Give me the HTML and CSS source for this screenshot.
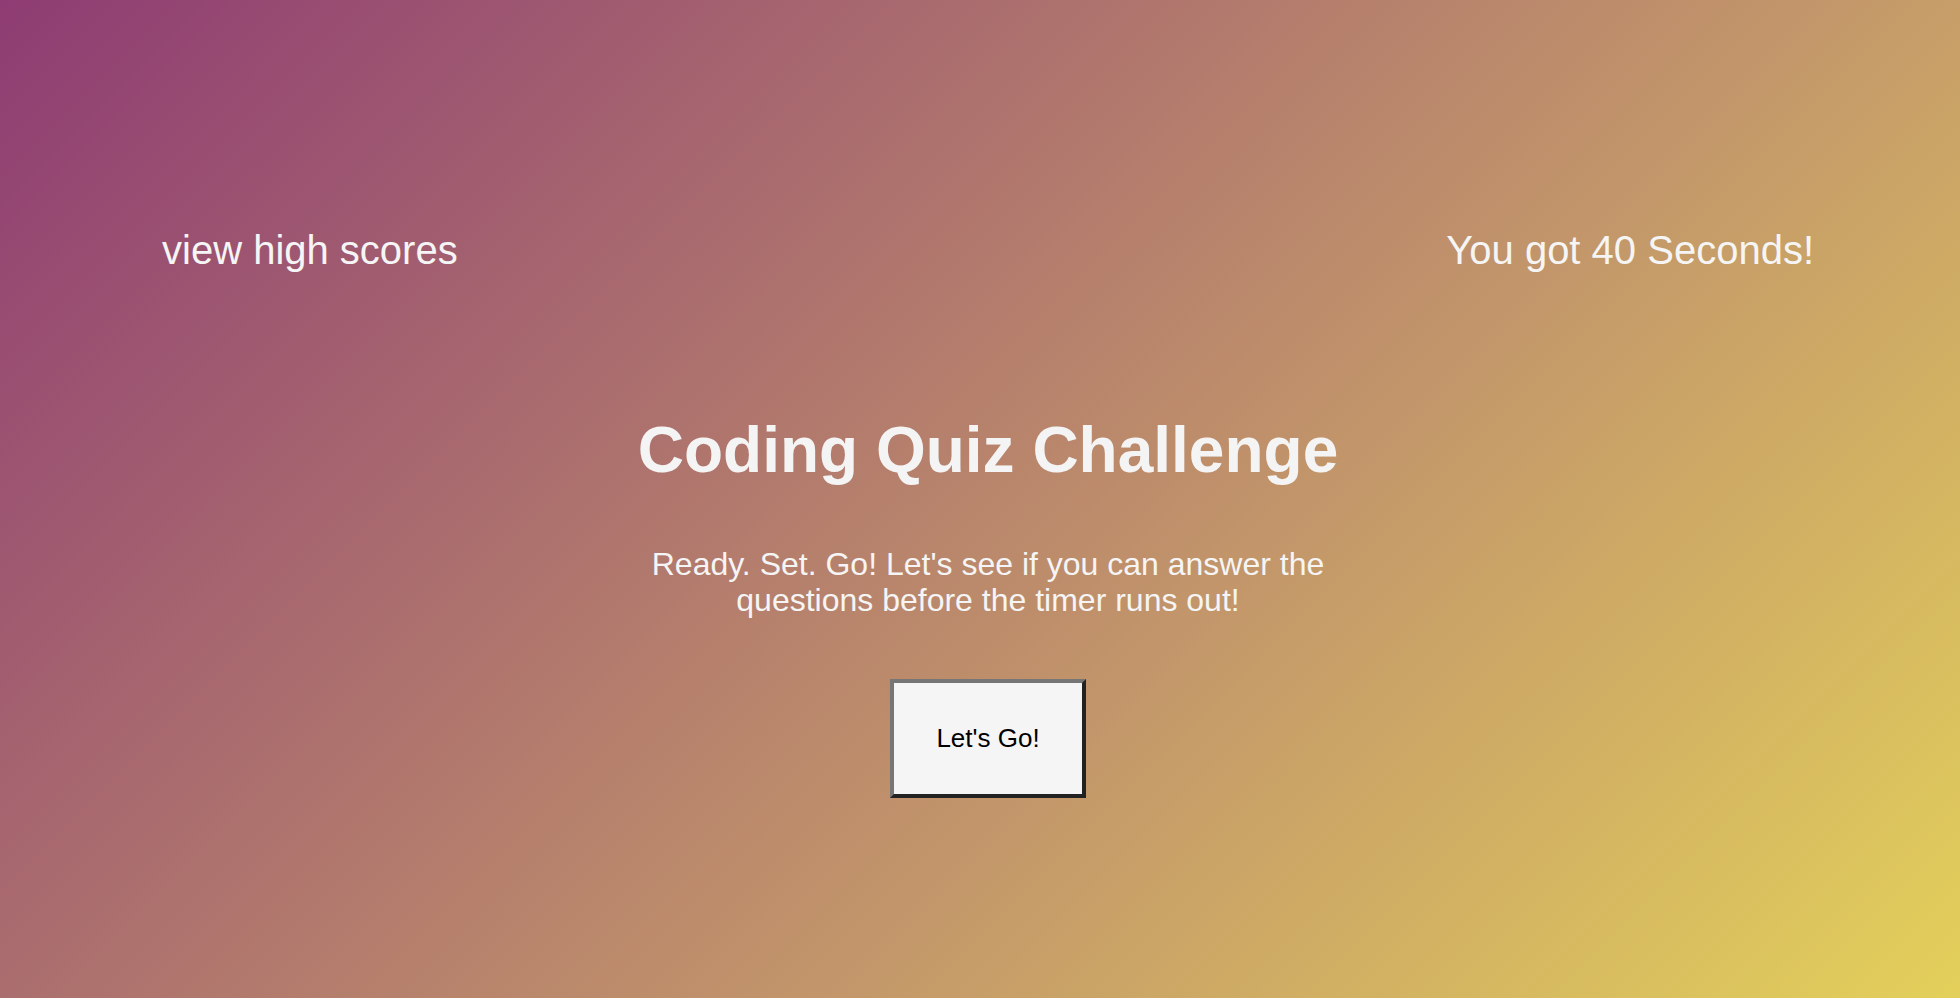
FILE: index.html
```html
<!DOCTYPE html>
<html lang="en">
<head>
    <meta charset="UTF-8">
    <meta name="viewport" content="width=device-width, initial-scale=1.0">
    <title>Coding Quiz Challenge</title>
    <link rel="stylesheet" href="styles.css">
</head>
<body>
    <div class="page">
        <header class="top-bar">
            <a href="#" class="high-scores">view high scores</a>
            <div class="timer">You got <span id="time-left">40</span> Seconds!</div>
        </header>
        <!-- Start screen -->
        <main class="intro">
            <h1>Coding Quiz Challenge</h1>
            <p>Ready. Set. Go! Let's see if you can answer the questions before the timer runs out!</p>
            <button class="btn-start" id="start">Let's Go!</button>
        </main>
    </div>
</body>
</html>
```

FILE: styles.css
```css
html, body {
    margin: 0;
    padding: 0;
    height: 100%;
}
body {
    font-family: "Liberation Sans", Arial, sans-serif;
    color: #f5f5f5;
    background: linear-gradient(135deg, #8e3c73, #c3976a 62%, #e3d05a);
}
.page {
    padding-left: 16px;
    min-height: 100%;
    box-sizing: border-box;
}
.top-bar {
    display: flex;
    justify-content: space-between;
    align-items: center;
    padding: 227px 146px 0 146px;
    font-size: 40px;
    line-height: 46px;
}
.high-scores {
    color: #f5f5f5;
    text-decoration: none;
}
.intro {
    display: flex;
    flex-direction: column;
    align-items: center;
    text-align: center;
    margin-top: 140px;
}
.intro h1 {
    font-size: 64px;
    line-height: 74px;
    margin: 0;
    color: #f4f4f4;
}
.intro p {
    font-size: 32px;
    line-height: 36px;
    width: 720px;
    margin: 59px 0 0;
}
.btn-start {
    margin-top: 61px;
    font-family: "Liberation Sans", Arial, sans-serif;
    font-size: 26px;
    line-height: 29px;
    padding: 41px 42px;
    color: #000;
    background-color: #f5f5f5;
    border: 4px solid;
    border-color: #767676 #222 #222 #767676;
    cursor: pointer;
}
```
